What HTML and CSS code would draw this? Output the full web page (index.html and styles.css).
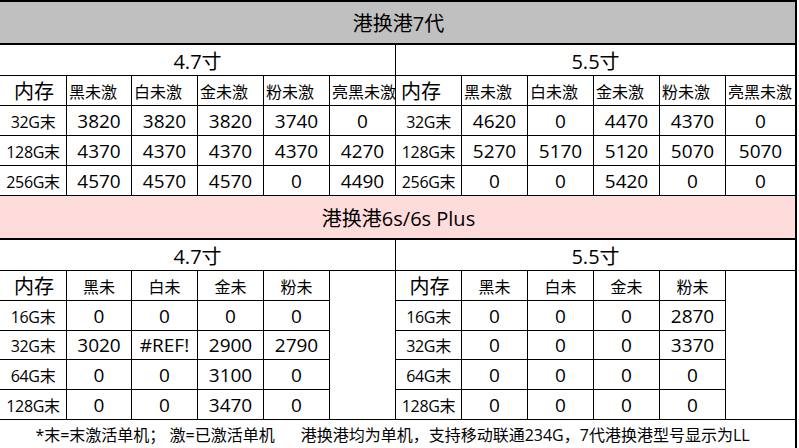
FILE: index.html
```html
<!DOCTYPE html>
<html lang="zh-CN">
<head>
<meta charset="utf-8">
<title>港换港价格表</title>
<link rel="stylesheet" href="styles.css">
</head>
<body>
<div class="sheet">
  <section class="sec sec7">
    <div class="c title gray span12">港换港7代</div>
    <div class="c size span6 br">4.7寸</div>
    <div class="c size span6">5.5寸</div>

    <div class="c mem br">内存</div>
    <div class="c hd br">黑未激</div>
    <div class="c hd br">白未激</div>
    <div class="c hd br">金未激</div>
    <div class="c hd br">粉未激</div>
    <div class="c hd br">亮黑未激</div>
    <div class="c mem mem-r br">内存</div>
    <div class="c hd br">黑未激</div>
    <div class="c hd br">白未激</div>
    <div class="c hd br">金未激</div>
    <div class="c hd br">粉未激</div>
    <div class="c hd">亮黑未激</div>

    <div class="c lbl br">32G末</div>
    <div class="c num br">3820</div>
    <div class="c num br">3820</div>
    <div class="c num br">3820</div>
    <div class="c num br">3740</div>
    <div class="c num br">0</div>
    <div class="c lbl br">32G末</div>
    <div class="c num br">4620</div>
    <div class="c num br">0</div>
    <div class="c num br">4470</div>
    <div class="c num br">4370</div>
    <div class="c num">0</div>

    <div class="c lbl br">128G末</div>
    <div class="c num br">4370</div>
    <div class="c num br">4370</div>
    <div class="c num br">4370</div>
    <div class="c num br">4370</div>
    <div class="c num br">4270</div>
    <div class="c lbl br">128G末</div>
    <div class="c num br">5270</div>
    <div class="c num br">5170</div>
    <div class="c num br">5120</div>
    <div class="c num br">5070</div>
    <div class="c num">5070</div>

    <div class="c lbl br">256G末</div>
    <div class="c num br">4570</div>
    <div class="c num br">4570</div>
    <div class="c num br">4570</div>
    <div class="c num br">0</div>
    <div class="c num br">4490</div>
    <div class="c lbl br">256G末</div>
    <div class="c num br">0</div>
    <div class="c num br">0</div>
    <div class="c num br">5420</div>
    <div class="c num br">0</div>
    <div class="c num">0</div>
  </section>

  <section class="sec sec6">
    <div class="c title pink span12">港换港6s/6s Plus</div>
    <div class="c size span6 br">4.7寸</div>
    <div class="c size span6">5.5寸</div>

    <div class="c mem br">内存</div>
    <div class="c hd2 br">黑未</div>
    <div class="c hd2 br">白未</div>
    <div class="c hd2 br">金未</div>
    <div class="c hd2 br">粉未</div>
    <div class="c empty br"></div>
    <div class="c mem br">内存</div>
    <div class="c hd2 br">黑未</div>
    <div class="c hd2 br">白未</div>
    <div class="c hd2 br">金未</div>
    <div class="c hd2 br">粉未</div>
    <div class="c empty"></div>

    <div class="c lbl br">16G末</div>
    <div class="c num br">0</div>
    <div class="c num br">0</div>
    <div class="c num br">0</div>
    <div class="c num br">0</div>
    <div class="c lbl br">16G末</div>
    <div class="c num br">0</div>
    <div class="c num br">0</div>
    <div class="c num br">0</div>
    <div class="c num br">2870</div>

    <div class="c lbl br">32G末</div>
    <div class="c num br">3020</div>
    <div class="c num br">#REF!</div>
    <div class="c num br">2900</div>
    <div class="c num br">2790</div>
    <div class="c lbl br">32G末</div>
    <div class="c num br">0</div>
    <div class="c num br">0</div>
    <div class="c num br">0</div>
    <div class="c num br">3370</div>

    <div class="c lbl br">64G末</div>
    <div class="c num br">0</div>
    <div class="c num br">0</div>
    <div class="c num br">3100</div>
    <div class="c num br">0</div>
    <div class="c lbl br">64G末</div>
    <div class="c num br">0</div>
    <div class="c num br">0</div>
    <div class="c num br">0</div>
    <div class="c num br">0</div>

    <div class="c lbl br">128G末</div>
    <div class="c num br">0</div>
    <div class="c num br">0</div>
    <div class="c num br">3470</div>
    <div class="c num br">0</div>
    <div class="c lbl br">128G末</div>
    <div class="c num br">0</div>
    <div class="c num br">0</div>
    <div class="c num br">0</div>
    <div class="c num br">0</div>
  </section>

  <footer class="note">
    <span>*末=末激活单机； 激=已激活单机</span>
    <span>港换港均为单机，支持移动联通234G，7代港换港型号显示为LL</span>
  </footer>
</div>
</body>
</html>
```
FILE: styles.css
```css
html, body {
  margin: 0;
  padding: 0;
  background: #ffffff;
}

body {
  font-family: "Open Sans", "Noto Sans CJK SC", sans-serif;
  color: #000000;
  overflow: hidden;
}

.sheet {
  width: 797px;
  box-sizing: border-box;
  border-top: 2px solid #000;
  border-right: 2px solid #000;
  height: 448px;
}

.sec {
  display: grid;
  grid-template-columns: 67px 65px 66px 66px 66px 66px 66px 66px 66px 66px 66px 69px;
}

.sec7 {
  grid-template-rows: 43px 31px 30px 30px 30px 30px;
}

.sec6 {
  grid-template-rows: 44px 31px 30px 30px 29px 30px 30px;
}

.c {
  box-sizing: border-box;
  border-bottom: 1px solid #000;
  display: flex;
  align-items: center;
  justify-content: center;
  white-space: nowrap;
  overflow: hidden;
  min-width: 0;
}

.br {
  border-right: 1px solid #000;
}

.span12 { grid-column: span 12; }
.span6 { grid-column: span 6; }

.title {
  font-size: 20px;
  border-bottom-width: 2px;
  padding-left: 2px;
}

.gray { background: #c0c0c0; }
.pink { background: #ffdcdc; }

.size {
  font-size: 20px;
}

.mem {
  font-size: 20px;
  padding-left: 2px;
}

.mem-r {
  justify-content: flex-start;
  padding-left: 5px;
}

.hd {
  font-size: 16px;
  justify-content: flex-start;
  padding-left: 2px;
}

.hd2 {
  font-size: 16px;
}

.lbl {
  font-size: 16px;
  letter-spacing: -0.3px;
}

.num {
  font-size: 19px;
}

.empty {
  grid-row: span 5;
}

.note {
  display: flex;
  justify-content: center;
  align-items: center;
  gap: 26px;
  height: 28px;
  font-size: 16px;
  padding-right: 10px;
}
```
